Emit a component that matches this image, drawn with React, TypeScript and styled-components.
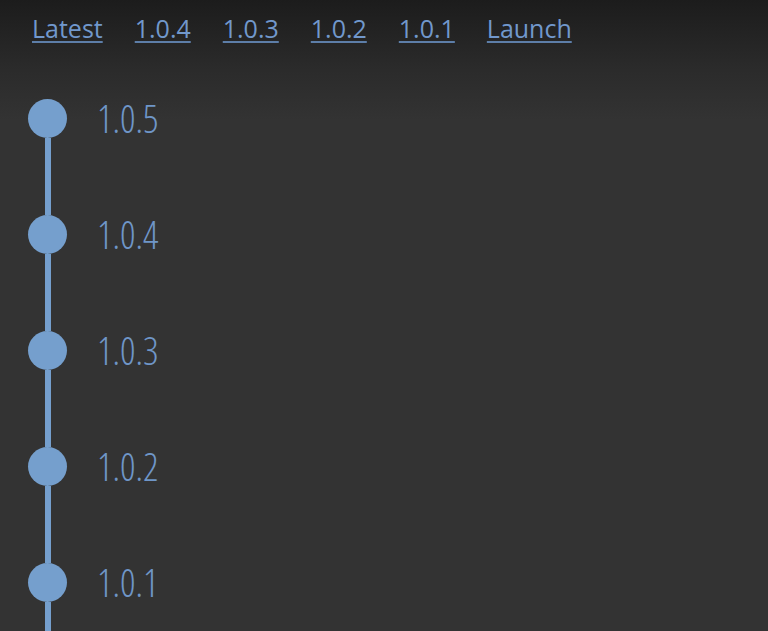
import React from 'react'
import styled, { createGlobalStyle } from 'styled-components'

const versions = ['1.0.5', '1.0.4', '1.0.3', '1.0.2', '1.0.1']
const links = ['Latest', '1.0.4', '1.0.3', '1.0.2', '1.0.1', 'Launch']

const GlobalStyle = createGlobalStyle`
  html, body {
    margin: 0;
    height: 100%;
  }

  body {
    background: linear-gradient(to bottom, #1c1c1c 0, #2b2b2b 70px, #333333 120px, #333333 100%);
    font-family: 'Open Sans', 'Liberation Sans', sans-serif;
    overflow: hidden;
  }
`

const App = () => (
  <Page>
    <GlobalStyle />
    <Nav>
      {links.map(label => (
        <NavLink key={label} href="#">
          {label}
        </NavLink>
      ))}
    </Nav>
    <Timeline>
      {versions.map(version => (
        <Release key={version}>
          <Marker>
            <Dot />
            <Stem />
          </Marker>
          <Version>{version}</Version>
        </Release>
      ))}
    </Timeline>
  </Page>
)

export default App

const Page = styled.div`
  height: 631px;
  overflow: hidden;
`

const Nav = styled.nav`
  display: flex;
  gap: 32px;
  padding: 12px 0 0 32px;
`

const NavLink = styled.a`
  font-size: 25px;
  line-height: 32px;
  color: #7198cc;
  text-decoration: underline;
  text-decoration-color: #5d7ea8;
  text-underline-offset: 3px;
`

const Timeline = styled.ul`
  list-style: none;
  margin: 55px 0 0 0;
  padding: 0 0 0 28px;
`

const Release = styled.li`
  display: flex;
  align-items: flex-start;
  height: 116px;
`

const Marker = styled.div`
  display: flex;
  flex-direction: column;
  align-items: center;
  width: 39px;
  height: 100%;
`

const Dot = styled.span`
  width: 39px;
  height: 39px;
  border-radius: 50%;
  background: #759fcd;
  flex-shrink: 0;
`

const Stem = styled.span`
  width: 6px;
  flex: 1;
  background: #759fcd;
`

const Version = styled.span`
  margin-left: 30px;
  font-size: 38px;
  font-weight: 300;
  font-stretch: 75%;
  line-height: 39px;
  color: #6f96c8;
`
